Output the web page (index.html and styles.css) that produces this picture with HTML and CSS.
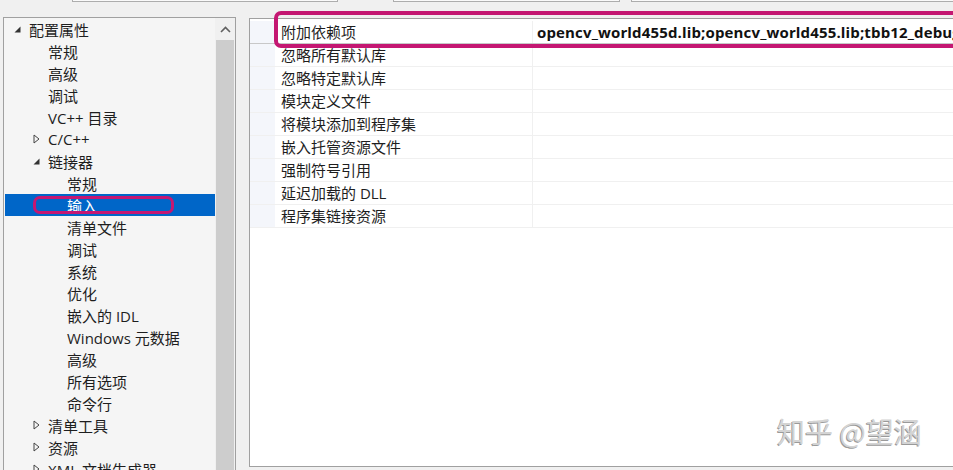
FILE: index.html
```html
<!DOCTYPE html>
<html lang="zh">
<head>
<meta charset="utf-8">
<link rel="stylesheet" href="styles.css">
</head>
<body>
<div class="page">
  <div class="topbar">
    <div class="combo combo1"></div>
    <div class="combo combo2"></div>
    <div class="combo combo3"></div>
  </div>
  <div class="main">
    <div class="treepanel">
      <div class="tree">
        <div class="item l0"><span class="twisty"><svg width="7" height="7" viewBox="0 0 7 7"><path d="M6.5 0.5 L6.5 6.5 L0.5 6.5 Z" fill="#333"/></svg></span><span>配置属性</span></div>
        <div class="item l1"><span class="twisty"></span><span>常规</span></div>
        <div class="item l1"><span class="twisty"></span><span>高级</span></div>
        <div class="item l1"><span class="twisty"></span><span>调试</span></div>
        <div class="item l1"><span class="twisty"></span><span>VC++ 目录</span></div>
        <div class="item l1"><span class="twisty"><svg width="7" height="10" viewBox="0 0 7 10"><path d="M1 1 L6 5 L1 9 Z" fill="none" stroke="#444" stroke-width="1"/></svg></span><span>C/C++</span></div>
        <div class="item l1"><span class="twisty"><svg width="7" height="7" viewBox="0 0 7 7"><path d="M6.5 0.5 L6.5 6.5 L0.5 6.5 Z" fill="#333"/></svg></span><span>链接器</span></div>
        <div class="item l2"><span class="twisty"></span><span>常规</span></div>
        <div class="item l2 selected"><span class="twisty"></span><span>输入</span><span class="mark-small"></span></div>
        <div class="item l2"><span class="twisty"></span><span>清单文件</span></div>
        <div class="item l2"><span class="twisty"></span><span>调试</span></div>
        <div class="item l2"><span class="twisty"></span><span>系统</span></div>
        <div class="item l2"><span class="twisty"></span><span>优化</span></div>
        <div class="item l2"><span class="twisty"></span><span>嵌入的 IDL</span></div>
        <div class="item l2"><span class="twisty"></span><span>Windows 元数据</span></div>
        <div class="item l2"><span class="twisty"></span><span>高级</span></div>
        <div class="item l2"><span class="twisty"></span><span>所有选项</span></div>
        <div class="item l2"><span class="twisty"></span><span>命令行</span></div>
        <div class="item l1"><span class="twisty"><svg width="7" height="10" viewBox="0 0 7 10"><path d="M1 1 L6 5 L1 9 Z" fill="none" stroke="#444" stroke-width="1"/></svg></span><span>清单工具</span></div>
        <div class="item l1"><span class="twisty"><svg width="7" height="10" viewBox="0 0 7 10"><path d="M1 1 L6 5 L1 9 Z" fill="none" stroke="#444" stroke-width="1"/></svg></span><span>资源</span></div>
        <div class="item l1"><span class="twisty"><svg width="7" height="10" viewBox="0 0 7 10"><path d="M1 1 L6 5 L1 9 Z" fill="none" stroke="#444" stroke-width="1"/></svg></span><span>XML 文档生成器</span></div>
      </div>
      <div class="scrollbar">
        <div class="sb-btn"><svg width="11" height="7" viewBox="0 0 11 7"><path d="M1 6 L5.5 1.5 L10 6" fill="none" stroke="#606060" stroke-width="1.6"/></svg></div>
        <div class="sb-thumb"></div>
      </div>
    </div>
    <div class="gridpanel">
      <div class="row first"><span class="margin"></span><span class="name">附加依赖项</span><span class="value">opencv_world455d.lib;opencv_world455.lib;tbb12_debug.lib;tbb12.lib</span></div>
      <div class="row"><span class="margin"></span><span class="name">忽略所有默认库</span><span class="value"></span></div>
      <div class="row"><span class="margin"></span><span class="name">忽略特定默认库</span><span class="value"></span></div>
      <div class="row"><span class="margin"></span><span class="name">模块定义文件</span><span class="value"></span></div>
      <div class="row"><span class="margin"></span><span class="name">将模块添加到程序集</span><span class="value"></span></div>
      <div class="row"><span class="margin"></span><span class="name">嵌入托管资源文件</span><span class="value"></span></div>
      <div class="row"><span class="margin"></span><span class="name">强制符号引用</span><span class="value"></span></div>
      <div class="row"><span class="margin"></span><span class="name">延迟加载的 DLL</span><span class="value"></span></div>
      <div class="row"><span class="margin"></span><span class="name">程序集链接资源</span><span class="value"></span></div>
    </div>
  </div>
  <div class="mark-big"></div>
  <div class="watermark">知乎 @望涵</div>
</div>
</body>
</html>
```
FILE: styles.css
```css
* { box-sizing: border-box; }
html, body { margin: 0; padding: 0; }
body {
  background: #f0f0f0;
  font-family: "Open Sans", "Noto Sans CJK SC", sans-serif;
  font-size: 15px;
  color: #1e1e1e;
}
.page {
  position: relative;
  width: 953px;
  height: 470px;
  overflow: hidden;
}
.topbar {
  display: flex;
  height: 17px;
}
.combo {
  height: 2px;
  border: 1px solid #adadad;
  border-top: none;
  background: #fafafa;
  flex-shrink: 0;
}
.combo1 { margin-left: 72px; width: 266px; }
.combo2 { margin-left: 55px; width: 227px; }
.combo3 { margin-left: 11px; flex: 1; border-right: none; }

.main {
  display: flex;
  align-items: flex-start;
  height: 453px;
}
.treepanel {
  flex-shrink: 0;
  margin-left: 3px;
  width: 233px;
  height: 460px;
  border: 1px solid #a0a0a0;
  background: #f5f5f5;
  display: flex;
}
.tree {
  flex: 1;
  min-width: 0;
  padding-top: 0;
  padding-left: 1px;
}
.item {
  display: flex;
  align-items: center;
  height: 22px;
  white-space: nowrap;
  position: relative;
}
.item.l0 { padding-left: 9px; }
.item.l1 { padding-left: 28px; }
.item.l2 { padding-left: 47px; }
.twisty {
  flex-shrink: 0;
  width: 15px;
  height: 22px;
  display: flex;
  align-items: center;
}
.item.selected {
  background: #0066c8;
  color: #ffffff;
}
.mark-small {
  position: absolute;
  left: 28px;
  top: 2px;
  width: 141px;
  height: 18px;
  border: 3px solid #c41772;
  border-radius: 7px;
}
.scrollbar {
  flex-shrink: 0;
  width: 20px;
  display: flex;
  flex-direction: column;
  background: #f0f0f0;
}
.sb-btn {
  height: 22px;
  display: flex;
  align-items: center;
  justify-content: center;
}
.sb-thumb {
  flex: 1;
  background: #cdcdcd;
  margin: 0 1px;
}

.gridpanel {
  margin-left: 13px;
  margin-top: 1px;
  flex: 1;
  min-width: 0;
  height: 449px;
  border: 1px solid #a0a0a0;
  border-right: none;
  background: #ffffff;
  padding-top: 2px;
  overflow: hidden;
}
.row {
  display: flex;
  height: 23px;
  border-bottom: 1px solid #f0f0f0;
}
.row.first { border-bottom-color: #c8c8c8; }
.margin {
  flex-shrink: 0;
  width: 25px;
  background: #f4f6fb;
}
.name {
  flex-shrink: 0;
  width: 258px;
  padding-left: 6px;
  line-height: 22px;
  border-right: 1px solid #f0f0f0;
  white-space: nowrap;
}
.value {
  flex: 1;
  min-width: 0;
  padding-left: 4px;
  line-height: 22px;
  font-weight: bold;
  letter-spacing: 0.15px;
  white-space: nowrap;
  overflow: hidden;
  color: #111;
}
.mark-big {
  position: absolute;
  left: 274px;
  top: 11px;
  width: 700px;
  height: 37px;
  border: 4px solid #c41772;
  border-radius: 7px;
}
.watermark {
  position: absolute;
  left: 777px;
  top: 411px;
  font-size: 28px;
  color: #d4d4d4;
  font-family: "Noto Sans CJK SC", sans-serif;
  text-shadow: -1px 1px 0 #9a9a9a, 1px -1px 0 #ffffff;
}
```
